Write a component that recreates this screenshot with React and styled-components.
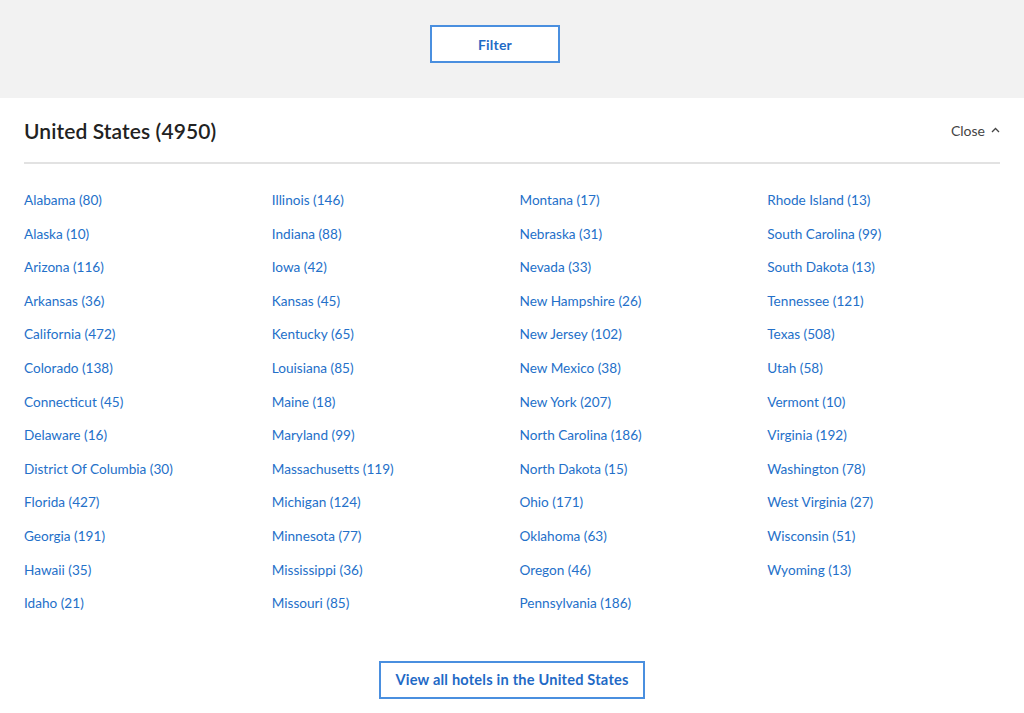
import styled, { createGlobalStyle } from "styled-components";

const states = [
	["Alabama", 80], ["Alaska", 10], ["Arizona", 116], ["Arkansas", 36], ["California", 472],
	["Colorado", 138], ["Connecticut", 45], ["Delaware", 16], ["District Of Columbia", 30],
	["Florida", 427], ["Georgia", 191], ["Hawaii", 35], ["Idaho", 21],
	["Illinois", 146], ["Indiana", 88], ["Iowa", 42], ["Kansas", 45], ["Kentucky", 65],
	["Louisiana", 85], ["Maine", 18], ["Maryland", 99], ["Massachusetts", 119],
	["Michigan", 124], ["Minnesota", 77], ["Mississippi", 36], ["Missouri", 85],
	["Montana", 17], ["Nebraska", 31], ["Nevada", 33], ["New Hampshire", 26], ["New Jersey", 102],
	["New Mexico", 38], ["New York", 207], ["North Carolina", 186], ["North Dakota", 15],
	["Ohio", 171], ["Oklahoma", 63], ["Oregon", 46], ["Pennsylvania", 186],
	["Rhode Island", 13], ["South Carolina", 99], ["South Dakota", 13], ["Tennessee", 121],
	["Texas", 508], ["Utah", 58], ["Vermont", 10], ["Virginia", 192], ["Washington", 78],
	["West Virginia", 27], ["Wisconsin", 51], ["Wyoming", 13],
];

const GlobalStyle = createGlobalStyle`
	body {
		margin: 0;
		background: #fff;
		font-family: Lato, "Open Sans", Arial, sans-serif;
		-webkit-font-smoothing: antialiased;
	}
`;

const FilterBar = styled.div`
	background: #f2f2f2;
	height: 98px;
	display: flex;
	justify-content: center;
	align-items: flex-start;
	padding: 25px 34px 0 0;
	box-sizing: border-box;
`;

const OutlineButton = styled.button`
	background: #fff;
	border: 2px solid #4a8fdf;
	color: #1f6ac6;
	font-family: Lato, Arial, sans-serif;
	font-weight: 700;
	font-size: ${({ $size }) => $size || 14}px;
	letter-spacing: 0.2px;
	height: ${({ $h }) => $h}px;
	width: ${({ $w }) => $w}px;
	cursor: pointer;
	padding: 0;
`;

const Panel = styled.section`
	padding: 0 24px;
`;

const Header = styled.div`
	display: flex;
	justify-content: space-between;
	align-items: center;
	height: 64px;
	border-bottom: 2px solid #e2e2e2;
`;

const Title = styled.h2`
	margin: 0;
	font-size: 21px;
	font-weight: 600;
	color: #222;
	letter-spacing: 0.1px;
`;

const CloseToggle = styled.button`
	background: none;
	border: none;
	padding: 0;
	display: flex;
	align-items: center;
	gap: 6px;
	font-family: Lato, Arial, sans-serif;
	font-size: 14px;
	color: #444;
	cursor: pointer;
`;

const StateGrid = styled.ul`
	list-style: none;
	margin: 0;
	padding: 22px 0 0;
	display: grid;
	grid-template-columns: repeat(4, 1fr);
	grid-template-rows: repeat(13, 33.6px);
	grid-auto-flow: column;
	column-gap: 15px;
`;

const StateLink = styled.a`
	font-size: 13.6px;
	color: #2470c9;
	text-decoration: none;
	line-height: 28px;
`;

const Footer = styled.div`
	display: flex;
	justify-content: center;
	padding: 38px 0 14px;
`;

export default function App() {
	return (
		<>
			<GlobalStyle />
			<FilterBar>
				<OutlineButton $w={130} $h={38}>Filter</OutlineButton>
			</FilterBar>
			<Panel>
				<Header>
					<Title>United States (4950)</Title>
					<CloseToggle>
						Close
						<svg width="9" height="6" viewBox="0 0 9 6" fill="none">
							<path d="M1 5 L4.5 1.5 L8 5" stroke="#444" strokeWidth="1.3" />
						</svg>
					</CloseToggle>
				</Header>
				<StateGrid>
					{states.map(([name, count]) => (
						<li key={name}>
							<StateLink href="#">{`${name} (${count})`}</StateLink>
						</li>
					))}
				</StateGrid>
				<Footer>
					<OutlineButton $w={266} $h={38} $size={14.6}>
						View all hotels in the United States
					</OutlineButton>
				</Footer>
			</Panel>
		</>
	);
}
